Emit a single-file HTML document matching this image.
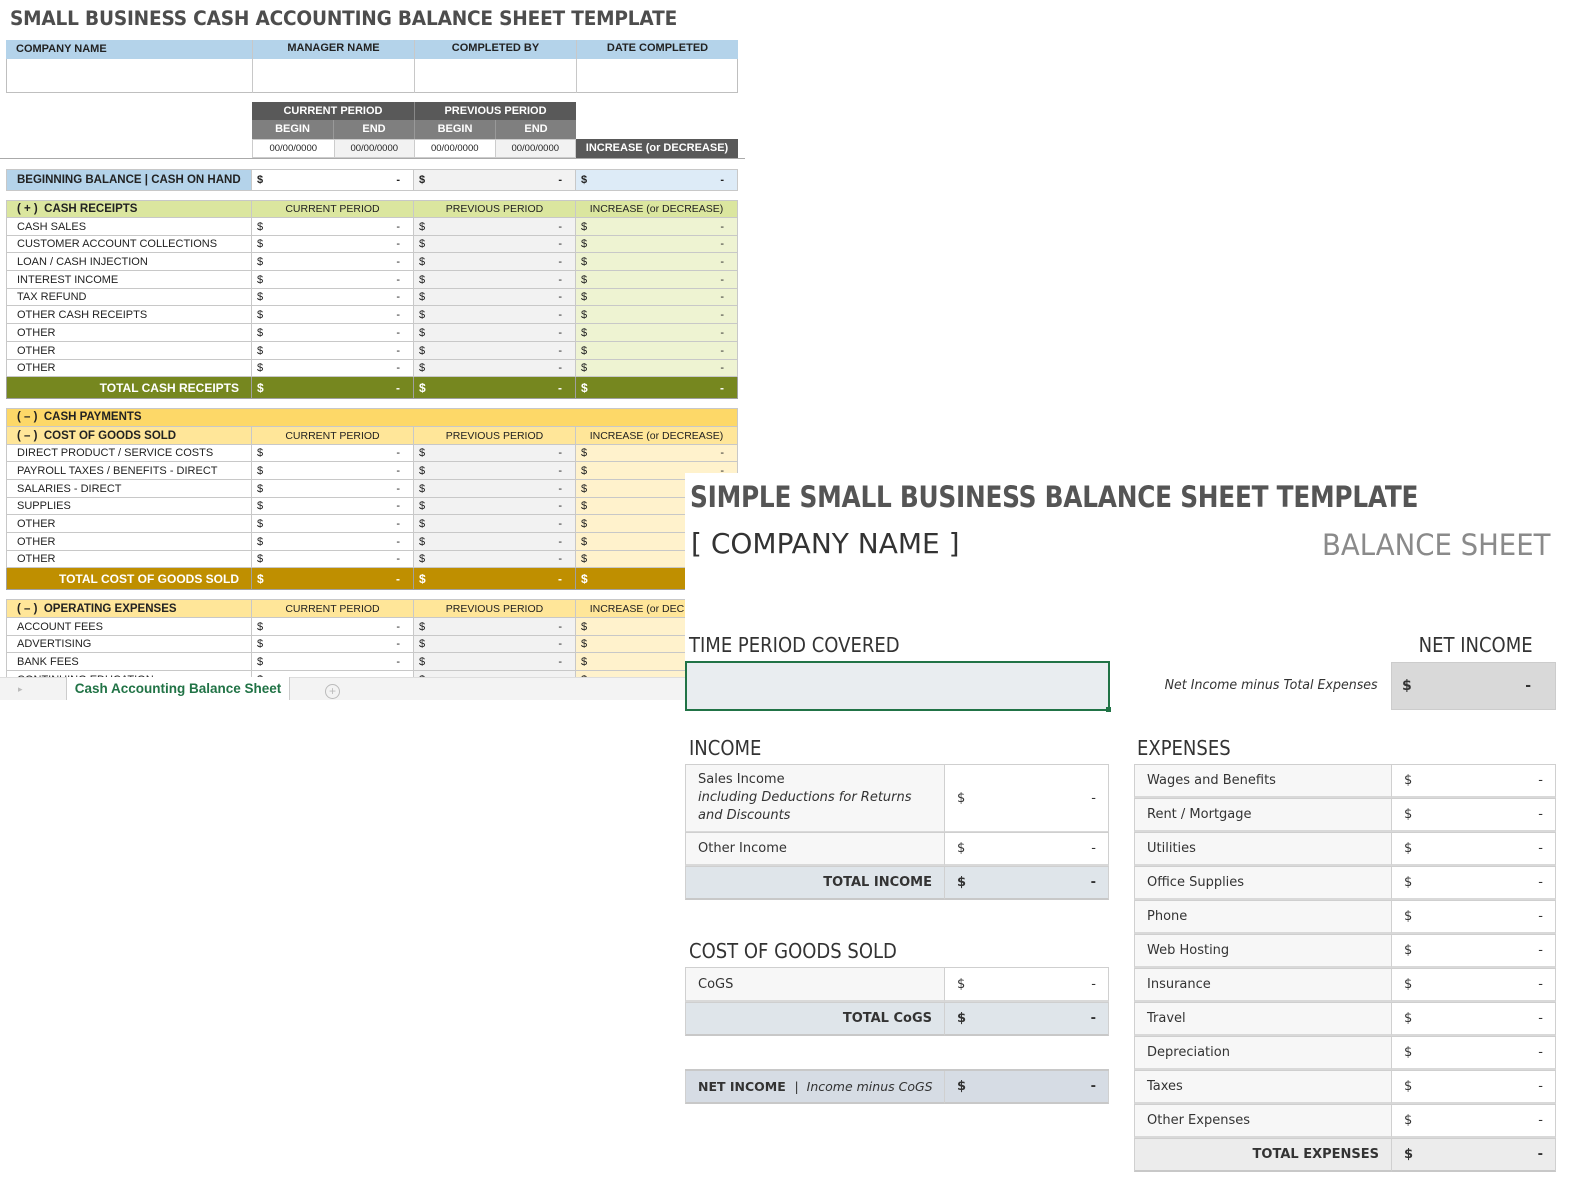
<!DOCTYPE html>
<html><head><meta charset="utf-8">
<style>
*{margin:0;padding:0;box-sizing:border-box}
body{width:1588px;height:1191px;background:#fff;position:relative;overflow:hidden;font-family:"Liberation Sans Narrow","Liberation Sans",sans-serif;color:#222}
.a{position:absolute}
.r{position:absolute;left:6px;display:flex;width:732px}
.r>div{border:1px solid #c8c8c8;border-top:none;height:100%;display:flex;align-items:center;font-size:11px;padding:0 5px;position:relative;white-space:nowrap;overflow:hidden}
.r>div:nth-child(1){width:246px;padding-left:10px}
.r>div:nth-child(2),.r>div:nth-child(3),.r>div:nth-child(4){width:162px;border-left:none}
.v{justify-content:space-between}
.v i{font-style:normal;padding-right:8px}
.g{background:#f2f2f2}
.yg{background:#eef3d2}
.yy{background:#fff2cc}
.b{font-weight:bold}
.hdr>div{justify-content:center;font-size:10.5px}
.hdr>div:nth-child(1){justify-content:flex-start;font-weight:bold;font-size:11.5px}
.tot>div{color:#fff;font-weight:bold;font-size:12px;border-color:#a0a0a0}
.tot>div:nth-child(1){justify-content:flex-end;padding-right:12px}
.rp{font-family:"DejaVu Sans","Liberation Sans",sans-serif;color:#333;white-space:nowrap}
.t2{position:absolute;display:flex;border-top:1px solid #cfcfcf}
.t2>div{border-bottom:2px solid #d9d9d9;border-left:1px solid #d0d0d0;display:flex;align-items:center;font-size:13px;padding:0 12px;font-family:"DejaVu Sans","Liberation Sans",sans-serif;color:#333;white-space:nowrap;overflow:hidden}
.t2>div:last-child{border-right:1px solid #d0d0d0;justify-content:space-between;background:#fff}
.t2 .lb{background:#f7f7f7}
.t2.tt>div{background:#dfe5ea;font-weight:bold;border-bottom:2px solid #c8c8c8}
.t2.tt>div:first-child{justify-content:flex-end}
</style></head><body>

<div class="a" style="left:10px;top:7px;font-family:'DejaVu Sans','Liberation Sans',sans-serif;font-weight:bold;font-size:19.5px;color:#4d4d4d;letter-spacing:-0.2px;transform:scaleX(0.95);transform-origin:left;white-space:nowrap">SMALL BUSINESS CASH ACCOUNTING BALANCE SHEET TEMPLATE</div>

<div class="a" style="left:6px;top:40px;width:732px;height:53px;border:1px solid #bfbfbf"></div>
<div class="a" style="left:6px;top:40px;width:732px;height:19px;background:#b4d3ea;display:flex;font-size:11px;font-weight:bold">
<div style="width:246px;padding-left:10px;line-height:19px">COMPANY NAME</div>
<div style="width:162px;text-align:center;line-height:17px;border-left:1px solid #c8c8c8">MANAGER NAME</div>
<div style="width:162px;text-align:center;line-height:17px;border-left:1px solid #c8c8c8">COMPLETED BY</div>
<div style="width:162px;text-align:center;line-height:17px;border-left:1px solid #c8c8c8">DATE COMPLETED</div></div>
<div class="a" style="left:252px;top:59px;width:1px;height:34px;background:#c8c8c8"></div>
<div class="a" style="left:414px;top:59px;width:1px;height:34px;background:#c8c8c8"></div>
<div class="a" style="left:576px;top:59px;width:1px;height:34px;background:#c8c8c8"></div>

<div class="a" style="left:252px;top:102px;width:324px;height:18px;background:#595959;display:flex;color:#fff;font-weight:bold;font-size:11px;line-height:18px;text-align:center"><div style="width:162px">CURRENT PERIOD</div><div style="width:162px;border-left:1px solid #888">PREVIOUS PERIOD</div></div>
<div class="a" style="left:252px;top:120px;width:324px;height:19px;background:#7f7f7f;display:flex;color:#fff;font-weight:bold;font-size:11px;line-height:19px;text-align:center"><div style="width:81px">BEGIN</div><div style="width:81px;border-left:1px solid #999">END</div><div style="width:81px;border-left:1px solid #999">BEGIN</div><div style="width:81px;border-left:1px solid #999">END</div></div>
<div class="a" style="left:252px;top:139px;width:324px;height:19px;display:flex;font-size:9.5px;line-height:18px;text-align:center;border:1px solid #ccc"><div style="width:81px">00/00/0000</div><div style="width:81px;background:#f2f2f2;border-left:1px solid #ccc">00/00/0000</div><div style="width:81px;border-left:1px solid #ccc">00/00/0000</div><div style="width:81px;background:#f2f2f2;border-left:1px solid #ccc">00/00/0000</div></div>
<div class="a" style="left:576px;top:139px;width:162px;height:19px;background:#595959;color:#fff;font-weight:bold;font-size:11px;line-height:19px;text-align:center">INCREASE (or DECREASE)</div>
<div class="a" style="left:0;top:158px;width:745px;height:1px;background:#aaa"></div>

<div class="r" style="top:169px;height:22px;border-top:1px solid #c8c8c8"><div class="b" style="background:#b4d3ea;font-size:11.5px">BEGINNING BALANCE | CASH ON HAND</div><div class="v b">$<i>-</i></div><div class="v b g">$<i>-</i></div><div class="v b" style="background:#ddebf7">$<i>-</i></div></div>

<div class="r hdr" style="top:200px;height:18px;border-top:1px solid #c8c8c8;background:#dbe69f"><div>( + )&nbsp; CASH RECEIPTS</div><div>CURRENT PERIOD</div><div>PREVIOUS PERIOD</div><div>INCREASE (or DECREASE)</div></div>
<div class="r" style="top:218px;height:18px"><div>CASH SALES</div><div class="v">$<i>-</i></div><div class="v g">$<i>-</i></div><div class="v yg">$<i>-</i></div></div>
<div class="r" style="top:236px;height:17px"><div>CUSTOMER ACCOUNT COLLECTIONS</div><div class="v">$<i>-</i></div><div class="v g">$<i>-</i></div><div class="v yg">$<i>-</i></div></div>
<div class="r" style="top:253px;height:18px"><div>LOAN / CASH INJECTION</div><div class="v">$<i>-</i></div><div class="v g">$<i>-</i></div><div class="v yg">$<i>-</i></div></div>
<div class="r" style="top:271px;height:18px"><div>INTEREST INCOME</div><div class="v">$<i>-</i></div><div class="v g">$<i>-</i></div><div class="v yg">$<i>-</i></div></div>
<div class="r" style="top:289px;height:17px"><div>TAX REFUND</div><div class="v">$<i>-</i></div><div class="v g">$<i>-</i></div><div class="v yg">$<i>-</i></div></div>
<div class="r" style="top:306px;height:18px"><div>OTHER CASH RECEIPTS</div><div class="v">$<i>-</i></div><div class="v g">$<i>-</i></div><div class="v yg">$<i>-</i></div></div>
<div class="r" style="top:324px;height:18px"><div>OTHER</div><div class="v">$<i>-</i></div><div class="v g">$<i>-</i></div><div class="v yg">$<i>-</i></div></div>
<div class="r" style="top:342px;height:18px"><div>OTHER</div><div class="v">$<i>-</i></div><div class="v g">$<i>-</i></div><div class="v yg">$<i>-</i></div></div>
<div class="r" style="top:360px;height:17px"><div>OTHER</div><div class="v">$<i>-</i></div><div class="v g">$<i>-</i></div><div class="v yg">$<i>-</i></div></div>
<div class="r tot" style="top:377px;height:22px;background:#76871f"><div>TOTAL CASH RECEIPTS</div><div class="v">$<i>-</i></div><div class="v">$<i>-</i></div><div class="v">$<i>-</i></div></div>

<div class="a" style="left:6px;top:408px;width:732px;height:19px;background:#fdd868;border:1px solid #c8c8c8;font-weight:bold;font-size:11.5px;padding-left:10px;line-height:17px">( – )&nbsp; CASH PAYMENTS</div>
<div class="r hdr" style="top:427px;height:18px;background:#ffe699"><div>( – )&nbsp; COST OF GOODS SOLD</div><div>CURRENT PERIOD</div><div>PREVIOUS PERIOD</div><div>INCREASE (or DECREASE)</div></div>
<div class="r" style="top:445px;height:17px"><div>DIRECT PRODUCT / SERVICE COSTS</div><div class="v">$<i>-</i></div><div class="v g">$<i>-</i></div><div class="v yy">$<i>-</i></div></div>
<div class="r" style="top:462px;height:18px"><div>PAYROLL TAXES / BENEFITS - DIRECT</div><div class="v">$<i>-</i></div><div class="v g">$<i>-</i></div><div class="v yy">$<i>-</i></div></div>
<div class="r" style="top:480px;height:18px"><div>SALARIES - DIRECT</div><div class="v">$<i>-</i></div><div class="v g">$<i>-</i></div><div class="v yy">$<i>-</i></div></div>
<div class="r" style="top:498px;height:17px"><div>SUPPLIES</div><div class="v">$<i>-</i></div><div class="v g">$<i>-</i></div><div class="v yy">$<i>-</i></div></div>
<div class="r" style="top:515px;height:18px"><div>OTHER</div><div class="v">$<i>-</i></div><div class="v g">$<i>-</i></div><div class="v yy">$<i>-</i></div></div>
<div class="r" style="top:533px;height:18px"><div>OTHER</div><div class="v">$<i>-</i></div><div class="v g">$<i>-</i></div><div class="v yy">$<i>-</i></div></div>
<div class="r" style="top:551px;height:17px"><div>OTHER</div><div class="v">$<i>-</i></div><div class="v g">$<i>-</i></div><div class="v yy">$<i>-</i></div></div>
<div class="r tot" style="top:568px;height:22px;background:#bf8f00"><div>TOTAL COST OF GOODS SOLD</div><div class="v">$<i>-</i></div><div class="v">$<i>-</i></div><div class="v">$<i>-</i></div></div>

<div class="r hdr" style="top:599px;height:19px;border-top:1px solid #c8c8c8;background:#ffe699"><div>( – )&nbsp; OPERATING EXPENSES</div><div>CURRENT PERIOD</div><div>PREVIOUS PERIOD</div><div>INCREASE (or DECREASE)</div></div>
<div class="r" style="top:618px;height:18px"><div>ACCOUNT FEES</div><div class="v">$<i>-</i></div><div class="v g">$<i>-</i></div><div class="v yy">$<i>-</i></div></div>
<div class="r" style="top:636px;height:17px"><div>ADVERTISING</div><div class="v">$<i>-</i></div><div class="v g">$<i>-</i></div><div class="v yy">$<i>-</i></div></div>
<div class="r" style="top:653px;height:18px"><div>BANK FEES</div><div class="v">$<i>-</i></div><div class="v g">$<i>-</i></div><div class="v yy">$<i>-</i></div></div>
<div class="r" style="top:671px;height:18px"><div>CONTINUING EDUCATION</div><div class="v">$<i>-</i></div><div class="v g">$<i>-</i></div><div class="v yy">$<i>-</i></div></div>

<div class="a" style="left:0;top:677px;width:690px;height:23px;background:#f3f3f3;border-top:1px solid #ddd"></div>
<div class="a" style="left:18px;top:684px;font-size:9px;color:#bbb">▸</div>
<div class="a" style="left:66px;top:677px;width:224px;height:23px;background:#fff;border-left:1px solid #ccc;border-right:1px solid #ccc;color:#217346;font-weight:bold;font-size:13.5px;text-align:center;line-height:24px;font-family:'Liberation Sans',sans-serif">Cash Accounting Balance Sheet</div>
<div class="a" style="left:325px;top:684px;width:15px;height:15px;border:1px solid #bbb;border-radius:50%;color:#bbb;font-size:12px;line-height:12px;text-align:center">+</div>

<div class="a" style="left:685px;top:473px;width:903px;height:718px;background:#fff"></div>
<div class="a" style="left:0;top:700px;width:685px;height:491px;background:#fff"></div>

<div class="a rp" style="left:690px;top:480px;font-weight:bold;font-size:29px;color:#555;transform:scaleX(0.855);transform-origin:left;letter-spacing:-0.3px">SIMPLE SMALL BUSINESS BALANCE SHEET TEMPLATE</div>
<div class="a rp" style="left:691px;top:527px;font-size:28px;color:#333;transform:scaleX(1.0);transform-origin:left">[ COMPANY NAME ]</div>
<div class="a rp" style="right:38px;top:528px;font-size:29px;color:#8a8a8a;transform:scaleX(0.95);transform-origin:right">BALANCE SHEET</div>

<div class="a rp" style="left:689px;top:633px;font-size:20px;transform:scaleX(0.9);transform-origin:left">TIME PERIOD COVERED</div>
<div class="a" style="left:685px;top:661px;width:425px;height:50px;background:#e9edf0;border:2px solid #217346"></div>
<div class="a" style="left:1106px;top:707px;width:5px;height:5px;background:#217346"></div>
<div class="a rp" style="right:55px;top:633px;font-size:20px;transform:scaleX(0.9);transform-origin:right">NET INCOME</div>
<div class="a rp" style="right:210px;top:678px;font-size:13px;font-style:italic;transform:scaleX(0.97);transform-origin:right">Net Income minus Total Expenses</div>
<div class="a rp" style="left:1391px;top:662px;width:165px;height:48px;background:#d9d9d9;border:1px solid #ccc;display:flex;justify-content:space-between;align-items:center;padding:0 24px 0 10px;font-weight:bold;font-size:14px">$<span>-</span></div>

<div class="a rp" style="left:689px;top:736px;font-size:20px;transform:scaleX(0.9);transform-origin:left">INCOME</div>
<div class="t2" style="left:685px;top:764px;height:69px"><div class="lb" style="width:259px;flex-direction:column;align-items:flex-start;justify-content:center;line-height:18px;white-space:normal">Sales Income<span style="font-style:italic">including Deductions for Returns and Discounts</span></div><div style="width:165px">$<span>-</span></div></div>
<div class="t2" style="left:685px;top:832px;height:34px"><div class="lb" style="width:259px">Other Income</div><div style="width:165px">$<span>-</span></div></div>
<div class="t2 tt" style="left:685px;top:866px;height:34px"><div style="width:259px">TOTAL INCOME</div><div style="width:165px;background:#dfe5ea">$<span>-</span></div></div>

<div class="a rp" style="left:689px;top:939px;font-size:20px;transform:scaleX(0.9);transform-origin:left">COST OF GOODS SOLD</div>
<div class="t2" style="left:685px;top:967px;height:35px"><div class="lb" style="width:259px">CoGS</div><div style="width:165px">$<span>-</span></div></div>
<div class="t2 tt" style="left:685px;top:1002px;height:34px"><div style="width:259px">TOTAL CoGS</div><div style="width:165px;background:#dfe5ea">$<span>-</span></div></div>

<div class="t2 tt" style="left:685px;top:1069px;height:35px;border-top:2px solid #c8c8c8"><div style="width:259px;justify-content:flex-start;background:#d6dce4;font-size:12.5px;padding-right:2px">NET INCOME&nbsp;&nbsp;<span style="font-weight:normal">|&nbsp;&nbsp;<i>Income minus CoGS</i></span></div><div style="width:165px;background:#d6dce4">$<span>-</span></div></div>

<div class="a rp" style="left:1137px;top:736px;font-size:20px;transform:scaleX(0.9);transform-origin:left">EXPENSES</div>
<div class="a" style="left:1134px;top:764px">
<div class="t2" style="left:0;top:0;height:34px"><div class="lb" style="width:257px">Wages and Benefits</div><div style="width:165px">$<span>-</span></div></div>
<div class="t2" style="left:0;top:34px;height:34px"><div class="lb" style="width:257px">Rent / Mortgage</div><div style="width:165px">$<span>-</span></div></div>
<div class="t2" style="left:0;top:68px;height:34px"><div class="lb" style="width:257px">Utilities</div><div style="width:165px">$<span>-</span></div></div>
<div class="t2" style="left:0;top:102px;height:34px"><div class="lb" style="width:257px">Office Supplies</div><div style="width:165px">$<span>-</span></div></div>
<div class="t2" style="left:0;top:136px;height:34px"><div class="lb" style="width:257px">Phone</div><div style="width:165px">$<span>-</span></div></div>
<div class="t2" style="left:0;top:170px;height:34px"><div class="lb" style="width:257px">Web Hosting</div><div style="width:165px">$<span>-</span></div></div>
<div class="t2" style="left:0;top:204px;height:34px"><div class="lb" style="width:257px">Insurance</div><div style="width:165px">$<span>-</span></div></div>
<div class="t2" style="left:0;top:238px;height:34px"><div class="lb" style="width:257px">Travel</div><div style="width:165px">$<span>-</span></div></div>
<div class="t2" style="left:0;top:272px;height:34px"><div class="lb" style="width:257px">Depreciation</div><div style="width:165px">$<span>-</span></div></div>
<div class="t2" style="left:0;top:306px;height:34px"><div class="lb" style="width:257px">Taxes</div><div style="width:165px">$<span>-</span></div></div>
<div class="t2" style="left:0;top:340px;height:34px"><div class="lb" style="width:257px">Other Expenses</div><div style="width:165px">$<span>-</span></div></div>
<div class="t2 tt" style="left:0;top:374px;height:34px"><div style="width:257px;background:#ececec">TOTAL EXPENSES</div><div style="width:165px;background:#ececec">$<span>-</span></div></div>
</div>
</body></html>
